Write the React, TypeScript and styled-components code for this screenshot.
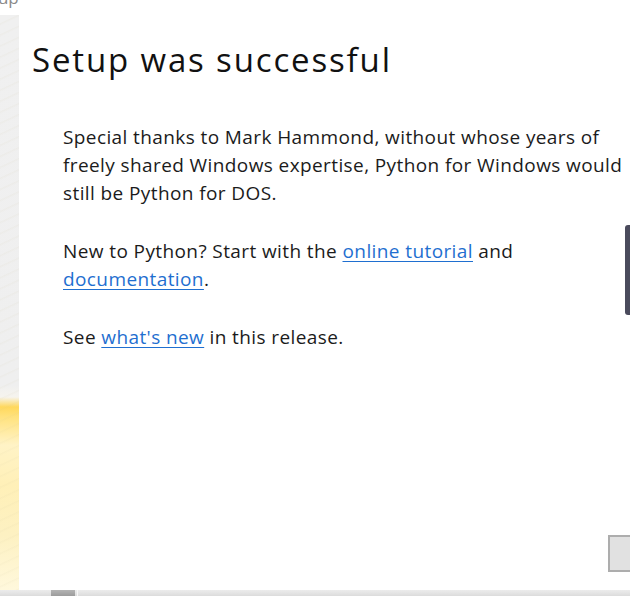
import React from "react";
import styled, { createGlobalStyle } from "styled-components";

const GlobalStyle = createGlobalStyle`
  html, body {
    margin: 0;
    padding: 0;
    background: #ffffff;
    overflow: hidden;
  }
  body {
    font-family: "Open Sans", "Noto Sans", "Liberation Sans", sans-serif;
  }
`;

const Window = styled.div`
  width: 630px;
  height: 596px;
  display: flex;
  flex-direction: column;
  background: #ffffff;
  overflow: hidden;
`;

const TitleBar = styled.div`
  height: 15px;
  flex-shrink: 0;
  overflow: hidden;
  background: #ffffff;
`;

const TitleText = styled.div`
  margin-left: -27px;
  margin-top: -12px;
  font-size: 17px;
  line-height: 20px;
  color: #8a8a8a;
`;

const Body = styled.div`
  flex: 1;
  display: flex;
  min-height: 0;
`;

const Sidebar = styled.div`
  width: 19px;
  flex-shrink: 0;
  background:
    repeating-linear-gradient(
      155deg,
      rgba(0, 0, 0, 0) 0px,
      rgba(0, 0, 0, 0) 7px,
      rgba(200, 190, 150, 0.08) 8px,
      rgba(0, 0, 0, 0) 10px
    ),
    linear-gradient(
      180deg,
      #f0f0f0 0px,
      #efefef 370px,
      #f6f4ee 382px,
      #ffd85c 392px,
      #ffe27e 402px,
      #fff3c6 430px,
      #fff0b8 470px,
      #fdf1c2 520px,
      #fff8dc 575px
    );
`;

const Content = styled.div`
  position: relative;
  flex: 1;
  display: flex;
  flex-direction: column;
  padding: 24px 0 0 13px;
  overflow: hidden;
`;

const Heading = styled.h1`
  margin: 0;
  font-weight: 400;
  font-size: 33px;
  line-height: 42px;
  color: #111111;
  letter-spacing: 1.85px;
`;

const Message = styled.div`
  margin: 42px 0 0 31px;
  font-size: 19px;
  line-height: 28px;
  letter-spacing: 0.4px;
  color: #1b1b1b;
`;

const Para = styled.p`
  margin: 0 0 30px 0;
`;

const Link = styled.a`
  color: #1f6fd0;
  text-decoration: underline;
  text-underline-offset: 3px;
  text-decoration-thickness: 1px;
`;

const Handle = styled.div`
  position: absolute;
  right: 0;
  top: 210px;
  width: 5px;
  height: 90px;
  background: #4a4b5c;
  border-radius: 3px 0 0 3px;
`;

const Footer = styled.div`
  margin-top: auto;
  display: flex;
  justify-content: flex-end;
  padding-bottom: 18px;
`;

const Button = styled.button`
  width: 80px;
  height: 37px;
  margin-right: -58px;
  background: #e1e1e1;
  border: 2px solid #adadad;
  border-radius: 0;
  padding: 0;
`;

const StatusBar = styled.div`
  height: 6px;
  flex-shrink: 0;
  display: flex;
  background: linear-gradient(180deg, #ececec, #dcdcdc);
`;

const StatusSegment = styled.div<{ $width: number; $dark?: boolean }>`
  width: ${(p) => p.$width}px;
  flex-shrink: 0;
  background: ${(p) =>
    p.$dark ? "linear-gradient(180deg, #b4b4b4, #9c9c9c)" : "transparent"};
`;

const StatusDivider = styled.div`
  width: 1px;
  margin-left: 2px;
  background: #f7f7f7;
`;

export default function App() {
  return (
    <>
      <GlobalStyle />
      <Window>
        <TitleBar>
          <TitleText>Setup</TitleText>
        </TitleBar>
        <Body>
          <Sidebar />
          <Content>
            <Heading>Setup was successful</Heading>
            <Message>
              <Para>
                Special thanks to Mark Hammond, without whose years of
                <br />
                freely shared Windows expertise, Python for Windows would
                <br />
                still be Python for DOS.
              </Para>
              <Para>
                New to Python? Start with the <Link href="#">online tutorial</Link> and
                <br />
                <Link href="#">documentation</Link>.
              </Para>
              <Para>
                See <Link href="#">what's new</Link> in this release.
              </Para>
            </Message>
            <Footer>
              <Button />
            </Footer>
            <Handle />
          </Content>
        </Body>
        <StatusBar>
          <StatusSegment $width={51} />
          <StatusSegment $width={24} $dark />
          <StatusDivider />
        </StatusBar>
      </Window>
    </>
  );
}
